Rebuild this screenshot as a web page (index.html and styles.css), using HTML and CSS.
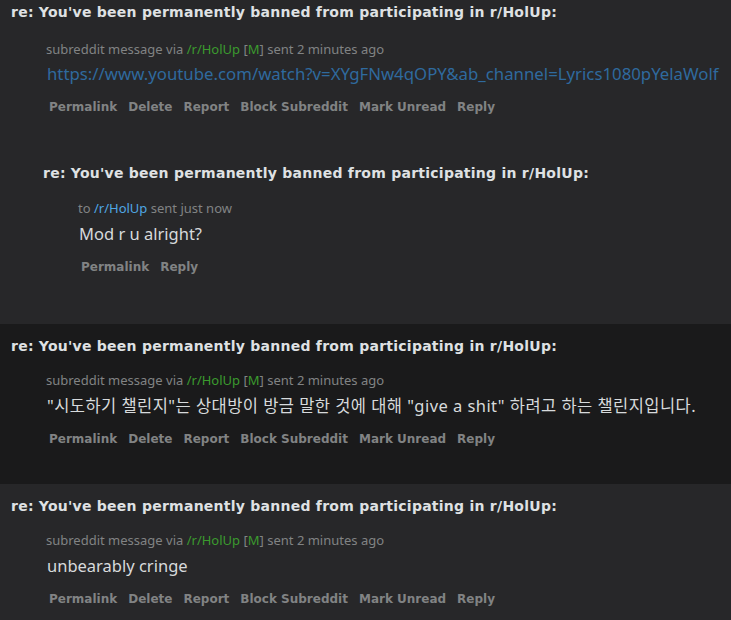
FILE: index.html
```html
<!DOCTYPE html>
<html>
<head>
<meta charset="utf-8">
<link rel="stylesheet" href="styles.css">
</head>
<body>
<div class="msg msg-first">
  <div class="title">re: You've been permanently banned from participating in r/HolUp:</div>
  <div class="entry entry-url">
    <div class="meta">subreddit message via <span class="sub">/r/HolUp</span> <span class="mod">[<span class="m">M</span>]</span> sent 2 minutes ago</div>
    <div class="body"><a class="url">https://www.youtube.com/watch?v=XYgFNw4qOPY&amp;ab_channel=Lyrics1080pYelaWolf</a></div>
    <div class="actions"><span>Permalink</span><span>Delete</span><span>Report</span><span>Block Subreddit</span><span>Mark Unread</span><span>Reply</span></div>
  </div>
  <div class="child">
    <div class="title">re: You've been permanently banned from participating in r/HolUp:</div>
    <div class="entry">
      <div class="meta">to <span class="to">/r/HolUp</span> sent just now</div>
      <div class="body">Mod r u alright?</div>
      <div class="actions"><span>Permalink</span><span>Reply</span></div>
    </div>
  </div>
</div>
<div class="msg msg-dark">
  <div class="title">re: You've been permanently banned from participating in r/HolUp:</div>
  <div class="entry">
    <div class="meta">subreddit message via <span class="sub">/r/HolUp</span> <span class="mod">[<span class="m">M</span>]</span> sent 2 minutes ago</div>
    <div class="body body-ko">"시도하기 챌린지"는 상대방이 방금 말한 것에 대해 "give a shit" 하려고 하는 챌린지입니다.</div>
    <div class="actions"><span>Permalink</span><span>Delete</span><span>Report</span><span>Block Subreddit</span><span>Mark Unread</span><span>Reply</span></div>
  </div>
</div>
<div class="msg">
  <div class="title">re: You've been permanently banned from participating in r/HolUp:</div>
  <div class="entry">
    <div class="meta">subreddit message via <span class="sub">/r/HolUp</span> <span class="mod">[<span class="m">M</span>]</span> sent 2 minutes ago</div>
    <div class="body">unbearably cringe</div>
    <div class="actions"><span>Permalink</span><span>Delete</span><span>Report</span><span>Block Subreddit</span><span>Mark Unread</span><span>Reply</span></div>
  </div>
</div>
</body>
</html>
```

FILE: styles.css
```css
html, body {
  margin: 0;
  padding: 0;
  background: #272729;
  overflow: hidden;
}
body {
  font-family: "Noto Sans", "Noto Sans CJK KR", sans-serif;
  color: #d7dadc;
}
.msg {
  background: #272729;
  padding: 12px 0 36px 11px;
}
.msg-first {
  margin-top: -10px;
  padding-bottom: 0;
}
.msg-dark {
  background: #1a1a1b;
}
.title {
  font-family: "DejaVu Sans", sans-serif;
  font-weight: bold;
  font-size: 14px;
  letter-spacing: 0.25px;
  line-height: 20px;
  color: #dfe1e3;
  white-space: nowrap;
}
.entry {
  padding-left: 35px;
  margin-top: 16px;
}
.meta {
  font-size: 13px;
  line-height: 16px;
  color: #818384;
  white-space: nowrap;
}
.sub, .m {
  color: #3b9a2e;
}
.to {
  color: #4fa6e3;
}
.body {
  margin-top: 7px;
  font-size: 16.5px;
  line-height: 22px;
  padding-left: 1px;
  white-space: nowrap;
}
.body-ko {
  letter-spacing: 0.45px;
}
.url {
  color: #2f6a9e;
  font-size: 16.8px;
}
.entry-url {
  margin-top: 19px;
}
.entry-url .body {
  margin-top: 6px;
}
.actions {
  margin-top: 13px;
  padding-left: 3px;
  display: flex;
  gap: 11px;
  font-family: "DejaVu Sans", sans-serif;
  font-weight: bold;
  font-size: 12px;
  line-height: 18px;
  color: #818384;
}
.child {
  padding-left: 32px;
  margin-top: 47px;
  padding-bottom: 48px;
}
.child .entry {
  margin-top: 17px;
}
```
